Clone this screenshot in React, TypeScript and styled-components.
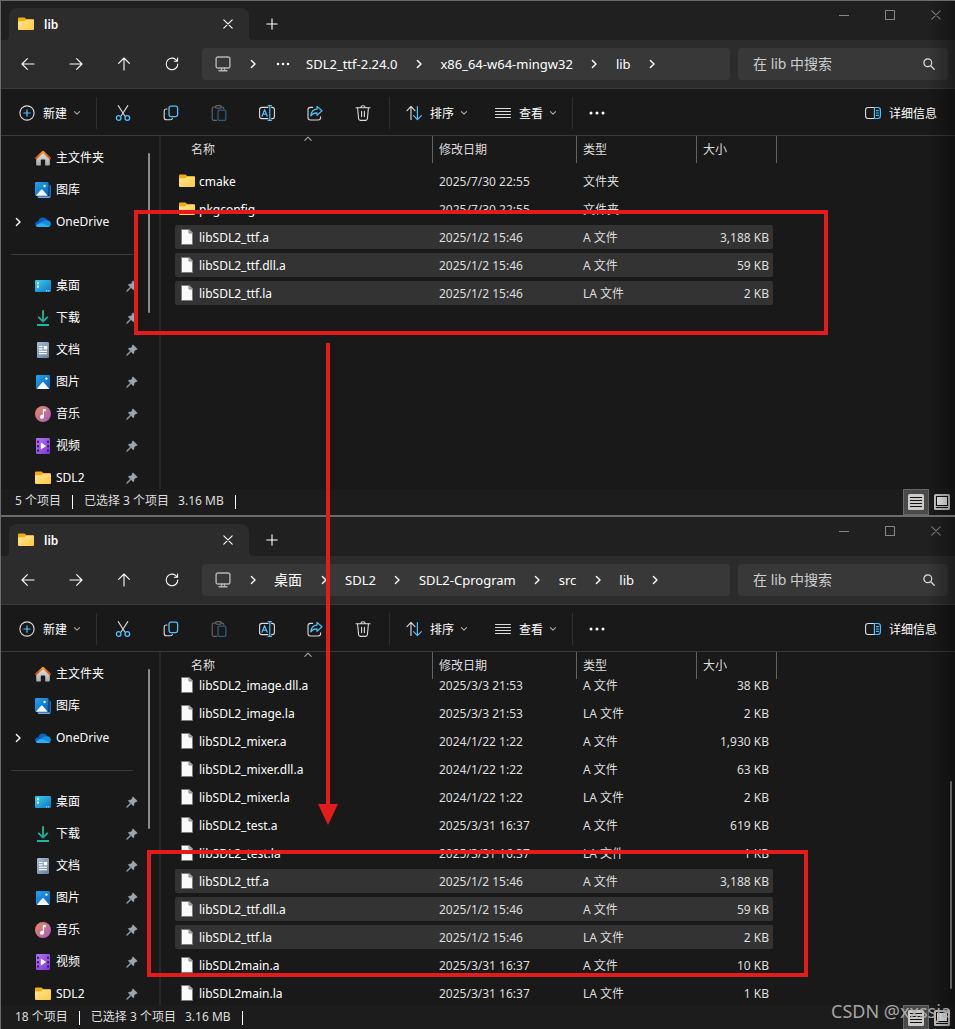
import React from "react";
import styled, { createGlobalStyle } from "styled-components";

const GlobalStyle = createGlobalStyle`
  *, *::before, *::after { box-sizing: border-box; }
  html, body { margin: 0; background: #191919; }
  body, button, input {
    font-family: "Noto Sans", "Noto Sans CJK SC", sans-serif;
    font-size: 12px;
    line-height: 16px;
    color: #ffffff;
  }
  button { margin: 0; padding: 0; border: 0; background: none; }
  svg { display: block; flex: none; }
`;

const Desktop = styled.main`
  position: relative;
  display: flex;
  flex-direction: column;
  height: 100vh;
  overflow: hidden;
`;

const ExplorerWindow = styled.section<{ $share: number; $cut?: boolean }>`
  position: relative;
  flex: ${(p) => p.$share} 1 0;
  min-height: 0;
  display: flex;
  flex-direction: column;
  overflow: hidden;
  background: #191919;
  border: 0 solid #6b6b6b;
  border-width: 1px 0 ${(p) => (p.$cut ? 0 : 1)}px 1px;
`;

const EdgeShade = styled.div`
  position: absolute;
  top: 0;
  right: 0;
  bottom: 0;
  width: 28px;
  pointer-events: none;
  background: linear-gradient(to right, rgba(0, 0, 0, 0), rgba(0, 0, 0, 0.35));
`;

const TitleBar = styled.header`
  flex: none;
  display: flex;
  align-items: flex-end;
  height: 39px;
  padding-left: 8px;
  background: #202020;
`;

const Tab = styled.div`
  position: relative;
  display: flex;
  align-items: center;
  width: 240px;
  height: 32px;
  padding: 0 16px 0 9px;
  gap: 10px;
  border-radius: 8px 8px 0 0;
  background: #2c2c2c;

  &::before,
  &::after {
    content: "";
    position: absolute;
    bottom: 0;
    width: 4px;
    height: 4px;
  }
  &::before {
    left: -4px;
    background: radial-gradient(circle at 0 0, #202020 4px, #2c2c2c 4px);
  }
  &::after {
    right: -4px;
    background: radial-gradient(circle at 100% 0, #202020 4px, #2c2c2c 4px);
  }
`;

const TabTitle = styled.span`
  flex: 1;
  padding-top: 2px;
  font-weight: 600;
`;

const NewTabButton = styled.button`
  display: grid;
  place-items: center;
  width: 32px;
  height: 32px;
  margin-left: 7px;
`;

const CaptionButtons = styled.div`
  align-self: flex-start;
  display: flex;
  margin-left: auto;
`;

const CaptionButton = styled.button`
  display: grid;
  place-items: center;
  width: 46px;
  height: 28px;
  color: #868686;

  &:last-child { width: 42px; padding-left: 4px; }
`;

const NavBar = styled.div`
  flex: none;
  display: flex;
  align-items: center;
  gap: 8px;
  height: 49px;
  padding: 0 7px 0 3px;
  background: #2c2c2c;
  border-bottom: 1px solid #3a3a3a;
`;

const NavButtons = styled.div`
  flex: none;
  display: flex;
  margin-right: -2px;
`;

const NavButton = styled.button`
  display: grid;
  place-items: center;
  width: 48px;
  height: 32px;
`;

const AddressBar = styled.nav`
  flex: 1;
  min-width: 0;
  display: flex;
  align-items: center;
  height: 32px;
  padding-left: 13px;
  border-radius: 4px;
  background: #383838;
  overflow: hidden;
`;

const Crumb = styled.a`
  flex: none;
  font-size: 13px;
  color: #ffffff;
  text-decoration: none;
  white-space: nowrap;

  &:lang(zh) { font-size: 14px; }
`;

const MoreCrumbs = styled.button`
  flex: none;
  margin-right: 14px;
`;

const CrumbArrow = styled.span`
  flex: none;
  display: grid;
  place-items: center;
  width: 43px;
`;

const SearchBox = styled.label`
  display: flex;
  align-items: center;
  width: 210px;
  height: 32px;
  padding: 0 13px 0 15px;
  border-radius: 4px;
  background: #383838;
`;

const SearchInput = styled.input`
  flex: 1;
  min-width: 0;
  padding: 0;
  border: 0;
  outline: 0;
  background: none;
  font-size: 14px;
  line-height: 20px;

  &::placeholder { color: #cecece; opacity: 1; }
`;

const CommandBar = styled.div`
  flex: none;
  display: flex;
  align-items: center;
  height: 47px;
  padding: 2px 18px 0 16px;
  border-bottom: 1px solid #3a3a3a;
`;

const CommandButton = styled.button<{ $flush?: boolean }>`
  display: flex;
  align-items: center;
  gap: 8px;
  height: 32px;
  padding: 0 ${(p) => (p.$flush ? 0 : 2)}px;
`;

const CommandLabel = styled.span`
  padding-top: 2px;
`;

const CommandGroup = styled.div<{ $gap?: number }>`
  display: flex;
  gap: ${(p) => p.$gap ?? 0}px;
`;

const CommandIconButton = styled.button<{ $dim?: boolean }>`
  display: grid;
  place-items: center;
  width: 48px;
  height: 32px;
  opacity: ${(p) => (p.$dim ? 0.4 : 1)};
`;

const Divider = styled.span<{ $before: number; $after: number }>`
  width: 1px;
  height: 32px;
  margin: 0 ${(p) => p.$after}px 0 ${(p) => p.$before}px;
  background: #2f2f2f;
`;

const PushRight = styled.div`
  margin-left: auto;
`;

const Caret = styled.span`
  margin-left: -2px;
`;

const Body = styled.div`
  flex: 1;
  min-height: 0;
  display: flex;
  overflow: hidden;
`;

const Sidebar = styled.nav`
  position: relative;
  flex: none;
  width: 160px;
  padding-top: 6px;
  border-right: 2px solid #282828;
  overflow: hidden;
`;

const SidebarList = styled.ul`
  margin: 0;
  padding: 0;
  list-style: none;

  & + & {
    margin: 16px 26px 0 10px;
    padding-top: 15px;
    border-top: 1px solid #3a3a3a;
  }
`;

const SidebarLink = styled.a<{ $pinned?: boolean }>`
  display: flex;
  align-items: center;
  gap: 5px;
  height: 32px;
  padding-left: ${(p) => (p.$pinned ? 24 : 34)}px;
  margin-right: ${(p) => (p.$pinned ? -5 : 0)}px;
  color: #ffffff;
  text-decoration: none;

  &[aria-expanded] { padding-left: 12px; }
`;

const ExpandMark = styled.span`
  display: grid;
  place-items: center;
  width: 9px;
  margin-right: 8px;
`;

const LinkLabel = styled.span`
  flex: 1;
`;

const ScrollThumb = styled.div<{ $top: number; $height: number; $right: number }>`
  position: absolute;
  top: ${(p) => p.$top}px;
  right: ${(p) => p.$right}px;
  width: 2px;
  height: ${(p) => p.$height}px;
  border-radius: 1px;
  background: #8c8c8c;
`;

const FilePane = styled.div`
  position: relative;
  flex: 1;
  min-width: 0;
  padding-left: 14px;
  overflow: hidden;
`;

const FileTable = styled.table`
  display: block;
`;

const HeadGroup = styled.thead`
  display: block;
`;

const HeadRow = styled.tr`
  position: relative;
  display: grid;
  grid-template-columns: 258px 144px 120px 80px;
  height: 28px;
`;

const HeadCell = styled.th<{ $first?: boolean }>`
  height: 27px;
  padding: 6px 0 0 ${(p) => (p.$first ? 16 : 6)}px;
  border-right: 1px solid #636363;
  font-weight: 400;
  text-align: left;
  color: #dedede;
`;

const SortMark = styled.span`
  position: absolute;
  top: 0;
  left: 129px;
`;

const FileRows = styled.tbody<{ $scrolled?: boolean }>`
  display: flex;
  flex-direction: column;
  gap: 4px;
  margin-top: ${(p) => (p.$scrolled ? -7 : 5)}px;
`;

const FileRow = styled.tr<{ $selected?: boolean }>`
  display: grid;
  grid-template-columns: 258px 144px 120px 76px;
  align-items: center;
  width: 598px;
  height: 24px;
  border-radius: 2px;
  background: ${(p) => (p.$selected ? "#333333" : "transparent")};
`;

const NameCell = styled.td`
  display: flex;
  align-items: center;
  gap: 4px;
  padding: 0 0 0 4px;
  white-space: nowrap;
`;

const FileName = styled.span`
  padding-top: 2px;
`;

const DataCell = styled.td<{ $numeric?: boolean }>`
  padding: 2px 4px 0 6px;
  color: #dedede;
  text-align: ${(p) => (p.$numeric ? "right" : "left")};
  white-space: nowrap;
`;

const StatusBar = styled.footer<{ $cut?: boolean }>`
  flex: none;
  display: flex;
  height: ${(p) => (p.$cut ? 24 : 26)}px;
  padding-left: 14px;
  overflow: hidden;
  line-height: 24px;
  color: #dedede;
  background: #1c1c1c;
`;

const StatusMark = styled.span`
  width: 1px;
  height: 14px;
  margin: 6px 11px 0;
  background: #ffffff;
`;

const StatusText = styled.span`
  & + & { margin-left: 9px; }
`;

const ViewButtons = styled.div`
  display: flex;
  margin-left: auto;
`;

const ViewButton = styled.button<{ $active?: boolean }>`
  display: grid;
  place-items: center;
  width: 26px;
  height: 26px;
  border: 1px solid ${(p) => (p.$active ? "#686868" : "transparent")};
  background: ${(p) => (p.$active ? "#4a4a4a" : "transparent")};
`;

const MarkBox = styled.div<{ $x: number; $y: number; $w: number; $h: number }>`
  position: absolute;
  left: ${(p) => p.$x}px;
  top: ${(p) => p.$y}px;
  width: ${(p) => p.$w}px;
  height: ${(p) => p.$h}px;
  border: 4px solid #e41b1b;
  pointer-events: none;
`;

const MarkArrow = styled.svg`
  position: absolute;
  left: 318px;
  top: 343px;
  pointer-events: none;
`;

const Watermark = styled.div`
  position: absolute;
  right: 4px;
  bottom: 6px;
  font-size: 18px;
  line-height: 24px;
  color: #b4b4b4;
  opacity: 0.9;
`;

const GradientDefs = styled.svg`
  position: absolute;
`;

type IconProps = { children: React.ReactNode; w?: number; h?: number; color?: string };

function Line({ children, w = 16, h = 16, color = "currentColor" }: IconProps) {
  return (
    <svg width={w} height={h} viewBox={`0 0 ${w} ${h}`} fill="none" stroke={color} strokeWidth="1.1" strokeLinecap="round" strokeLinejoin="round" aria-hidden="true">
      {children}
    </svg>
  );
}

const BLUE = "#4cc2ff";
const PALE = "#dcdcdc";

const Gradients = () => (
  <GradientDefs width="0" height="0" aria-hidden="true">
    <defs>
      <linearGradient id="gFolder" x1="0" y1="0" x2="1" y2="1"><stop offset="0" stopColor="#ffe79a" /><stop offset="1" stopColor="#ffc93c" /></linearGradient>
      <linearGradient id="gHouse" x1="0" y1="0" x2="0" y2="1"><stop offset="0" stopColor="#e8e8e8" /><stop offset="1" stopColor="#a9a9a9" /></linearGradient>
      <linearGradient id="gRoof" x1="0" y1="0" x2="0" y2="1"><stop offset="0" stopColor="#f59a23" /><stop offset="1" stopColor="#d1491a" /></linearGradient>
      <linearGradient id="gPhoto" x1="0" y1="0" x2="1" y2="1"><stop offset="0" stopColor="#23a4ee" /><stop offset="1" stopColor="#0a5fbd" /></linearGradient>
      <linearGradient id="gDesk" x1="0" y1="0" x2="1" y2="1"><stop offset="0" stopColor="#35d3ea" /><stop offset="1" stopColor="#1173c9" /></linearGradient>
      <linearGradient id="gDown" x1="0" y1="0" x2="0" y2="1"><stop offset="0" stopColor="#35c481" /><stop offset="1" stopColor="#12a99b" /></linearGradient>
      <linearGradient id="gDoc" x1="0" y1="0" x2="1" y2="1"><stop offset="0" stopColor="#a9bfd4" /><stop offset="1" stopColor="#63809f" /></linearGradient>
      <linearGradient id="gMusic" x1="0" y1="0" x2="1" y2="1"><stop offset="0" stopColor="#f08a5d" /><stop offset="1" stopColor="#a05ac0" /></linearGradient>
      <linearGradient id="gVideo" x1="0" y1="0" x2="1" y2="1"><stop offset="0" stopColor="#b677f2" /><stop offset="1" stopColor="#7a34d6" /></linearGradient>
    </defs>
  </GradientDefs>
);

const FolderIcon = () => (
  <svg width="16" height="16" viewBox="0 0 16 16" aria-hidden="true">
    <path d="M0 2.5Q0 1.5 1 1.5H6.2Q6.8 1.5 7.2 2L8.2 3.2H15Q16 3.2 16 4.2V6H0Z" fill="#f4ae0c" />
    <path d="M0 6Q0 5.2 1 5.2H6.4L8 3.6H15Q16 3.6 16 4.6V13Q16 14 15 14H1Q0 14 0 13Z" fill="url(#gFolder)" />
  </svg>
);

const FileIcon = () => (
  <svg width="16" height="16" viewBox="0 0 16 16" aria-hidden="true">
    <path d="M2.5 .5H10L13.5 4V15.5H2.5Z" fill="#fafafa" stroke="#7d7d7d" />
    <path d="M10 .5V4H13.5Z" fill="#d5d5d5" stroke="#7d7d7d" />
  </svg>
);

const HomeIcon = () => (
  <svg width="16" height="16" viewBox="0 0 16 16" aria-hidden="true">
    <path d="M1.2 7.5L8 1.5L14.8 7.5V14.5Q14.8 15.4 14 15.4H10.2V10.2Q10.2 9.4 9.4 9.4H6.6Q5.8 9.4 5.8 10.2V15.4H2Q1.2 15.4 1.2 14.5Z" fill="url(#gHouse)" />
    <path d="M1 8.2L8 1.8L15 8.2" fill="none" stroke="url(#gRoof)" strokeWidth="2" strokeLinecap="round" strokeLinejoin="round" />
  </svg>
);

const GalleryIcon = () => (
  <svg width="16" height="16" viewBox="0 0 16 16" aria-hidden="true">
    <path d="M14.4 2.5Q16 2.7 16 4V13.5Q16 16 13.5 16H4Q2.6 16 2.4 14.6H13Q14.4 14.6 14.4 13Z" fill="#1c6fc4" />
    <path d="M2.5 14.6H13.4L15.5 15Q14.8 16 13.5 16H4Q2.8 16 2.5 14.6Z" fill="#79aee6" />
    <rect width="13.6" height="13.8" rx="1.4" fill="url(#gPhoto)" />
    <path d="M1 13.4L6.3 7.6Q6.8 7.2 7.3 7.6L12.6 13.4Q12 13.8 11.5 13.8H2Q1.4 13.8 1 13.4Z" fill="#f4faff" />
    <circle cx="9.6" cy="4" r="1.2" fill="#f4faff" />
  </svg>
);

const CloudIcon = () => (
  <svg width="16" height="16" viewBox="0 0 16 16" aria-hidden="true">
    <path d="M3.3 7.2A5 5 0 0 1 12.6 6.3L8.5 10L2 12.5Q0 11.5 0 9.7Q.3 7.5 3.3 7.2Z" fill="#0a63c0" />
    <path d="M12.4 6.3Q15.7 6.8 16 9.8Q15.8 12.9 13 13H3.6Q1.7 13 .7 11.6L6.6 8Q9.3 5.8 12.4 6.3Z" fill="#168de0" />
    <path d="M.7 11.7Q4 8.4 8 9.4L14.9 12.3Q14 13 13 13H3.6Q1.6 13 .7 11.7Z" fill="#2bb0f4" />
  </svg>
);

const DesktopIcon = () => (
  <svg width="16" height="16" viewBox="0 0 16 16" aria-hidden="true">
    <rect y="2" width="16" height="12" rx="1.2" fill="url(#gDesk)" />
    <rect x="2" y="4.2" width="2" height="2" fill="#fff" />
    <rect x="2" y="7.6" width="2" height="2" fill="#fff" />
    <path d="M11 12.8H12.2M13.2 12.8H14.4" stroke="#d9f2ff" />
  </svg>
);

const DownloadIcon = () => (
  <svg width="16" height="16" viewBox="0 0 16 16" fill="none" stroke="url(#gDown)" strokeWidth="1.8" aria-hidden="true">
    <path d="M8.1 0.2L8 11.4M3.2 6.8L8 11.4L12.8 6.8" />
    <path d="M2 15L14 15.01" stroke="#1bb89b" />
  </svg>
);

const DocumentIcon = () => (
  <svg width="16" height="16" viewBox="0 0 16 16" aria-hidden="true">
    <rect x="2" width="12" height="16" rx="1.2" fill="url(#gDoc)" />
    <path d="M4 4.5H7.6M4 6.9H7.6M4 9.3H12M4 11.7H12" stroke="#fff" strokeWidth="1.2" />
    <rect x="8.8" y="4" width="3.4" height="3.4" fill="#fff" />
  </svg>
);

const PictureIcon = () => (
  <svg width="16" height="16" viewBox="0 0 16 16" aria-hidden="true">
    <rect x="1" y="1" width="14" height="14" rx="1.2" fill="url(#gPhoto)" />
    <path d="M2 14.4L7.4 8.2Q8 7.7 8.6 8.2L14 14.4Q13.6 15 13 15H3Q2.4 15 2 14.4Z" fill="#f4faff" />
    <circle cx="11.4" cy="4.6" r="1.2" fill="#f4faff" />
  </svg>
);

const MusicIcon = () => (
  <svg width="16" height="16" viewBox="0 0 16 16" aria-hidden="true">
    <circle cx="8" cy="8" r="8" fill="url(#gMusic)" />
    <path d="M7.8 3H10.8V5.2H9V10.7A2 2 0 1 1 7.8 8.9Z" fill="#fff" />
  </svg>
);

const VideoIcon = () => (
  <svg width="16" height="16" viewBox="0 0 16 16" aria-hidden="true">
    <rect x="1" width="14" height="16" rx="1.2" fill="url(#gVideo)" />
    <path d="M3 2.8V14M13 2.8V14" stroke="#3c1470" strokeWidth="2" strokeDasharray="2 2.4" />
    <path d="M5.8 4.6V11.6L11.2 8.1Z" fill="#fff" />
  </svg>
);

const PinIcon = () => (
  <svg width="12" height="12" viewBox="0 0 12 12" aria-hidden="true">
    <path d="M7 .8L11.3 5L10.6 5.8Q9.6 5.6 9 6.2L8 7.4Q8.2 9 7.4 9.9L5 7.6L1.6 11.2L.6 11.4L.9 10.4L4.4 7L2.2 4.7Q3.1 3.9 4.7 4.1L6 3Q6.5 2.4 6.2 1.5Z" fill="#9aa5ad" stroke="#9aa5ad" strokeWidth=".5" />
  </svg>
);

const ChevronRight = () => (
  <Line w={8} h={10}><path d="M2.4 1.4L6 5L2.4 8.6" strokeWidth="1.4" /></Line>
);
const ChevronDown = () => (
  <Line w={8} h={8} color="#a8a8a8"><path d="M1.4 2.6L4 5.2L6.6 2.6" /></Line>
);
const ChevronUp = () => (
  <Line w={8} h={6} color="#a8a8a8"><path d="M.8 4.4L4 1.2L7.2 4.4" /></Line>
);
const CloseIcon = () => (
  <Line w={10} h={10}><path d="M.8 .8L9.2 9.2M9.2 .8L.8 9.2" /></Line>
);
const MonitorIcon = () => (
  <Line color="#b4b4b4"><rect x="1.1" y="1" width="13.8" height="11" rx="1.8" strokeWidth="1.4" /><path d="M6.5 12V14.6M9.5 12V14.6M4 14.7H12" strokeWidth="1.4" /></Line>
);
const DotsIcon = ({ size }: { size: number }) => (
  <svg width="18" height="4" viewBox="0 0 18 4" fill="#fff" aria-hidden="true">
    <circle cx={9 - size} cy="2" r={size / 4} /><circle cx="9" cy="2" r={size / 4} /><circle cx={9 + size} cy="2" r={size / 4} />
  </svg>
);
const SearchIcon = () => (
  <Line w={12} h={12} color="#e2e2e2"><circle cx="4.8" cy="4.8" r="3.9" strokeWidth="1.2" /><path d="M7.8 7.8L11.2 11.2" strokeWidth="1.4" /></Line>
);

function Caption() {
  return (
    <CaptionButtons>
      <CaptionButton aria-label="最小化"><Line w={10} h={10}><path d="M0 5.5H10" /></Line></CaptionButton>
      <CaptionButton aria-label="最大化"><Line w={10} h={10}><rect x=".5" y=".5" width="9" height="9" rx=".5" /></Line></CaptionButton>
      <CaptionButton aria-label="关闭"><CloseIcon /></CaptionButton>
    </CaptionButtons>
  );
}

function Commands() {
  return (
    <CommandBar>
      <CommandButton>
        <Line color={PALE}><circle cx="8" cy="8" r="7.1" /><path d="M8 4.8V11.2M4.8 8H11.2" stroke={BLUE} strokeWidth="1.2" /></Line>
        <CommandLabel>新建</CommandLabel>
        <Caret><ChevronDown /></Caret>
      </CommandButton>
      <Divider $before={13} $after={2} />
      <CommandGroup>
        <CommandIconButton aria-label="剪切">
          <Line color={PALE}><path d="M3.2 .6L9.9 11M12.8 .6L6.1 11" /><g stroke={BLUE} strokeWidth="1.3"><circle cx="3.7" cy="13" r="2.3" /><circle cx="12.3" cy="13" r="2.3" /></g></Line>
        </CommandIconButton>
        <CommandIconButton aria-label="复制">
          <Line color={PALE}><path d="M4 4H3Q1.2 4 1.2 6V12.5Q1.2 14.8 3.5 14.8H7.4Q9.2 14.8 9.4 13.2" /><rect x="6" y="1.2" width="8.6" height="10.4" rx="1.8" stroke={BLUE} strokeWidth="1.3" /></Line>
        </CommandIconButton>
        <CommandIconButton aria-label="粘贴" $dim>
          <Line color={PALE}><path d="M4.6 2H2.8Q1.2 2 1.2 3.6V13.8Q1.2 15.4 2.8 15.4H5.6M10 2H11.4Q12.8 2 12.8 3.6V4" /><rect x="4.6" y=".6" width="5.6" height="2.6" rx="1.2" /><rect x="7" y="5.2" width="7.8" height="10.2" rx="1.4" stroke={BLUE} strokeWidth="1.3" /></Line>
        </CommandIconButton>
        <CommandIconButton aria-label="重命名">
          <Line color={PALE}><path d="M9 2.4H3Q.6 2.4 .6 4.6V11.4Q.6 13.6 3 13.6H9M12.6 2.4H13.2Q15.4 2.4 15.4 4.6V11.4Q15.4 13.6 13.2 13.6H12.6" /><path d="M3 11.2L5.6 4.6L8.2 11.2M4 9.2H7.2M9.2 .6H12.4M9.2 15.4H12.4M10.8 .6V15.4" stroke={BLUE} strokeWidth="1.2" /></Line>
        </CommandIconButton>
        <CommandIconButton aria-label="共享">
          <Line color={PALE}><path d="M5.6 2.4H3.4Q1 2.4 1 4.8V12.6Q1 15 3.4 15H11.2Q13.6 15 13.6 12.6V11.8" /><path d="M10 1.4L15 5.8L10 10.4V7.8Q6 7.6 3.8 10.8Q4.4 4.6 10 4.2Z" stroke={BLUE} strokeWidth="1.2" /></Line>
        </CommandIconButton>
        <CommandIconButton aria-label="删除">
          <Line color={PALE}><path d="M1 2.8H15M5.8 2.6Q6 .7 8 .7Q10 .7 10.2 2.6M2.6 3L3.6 13.8Q3.8 15.4 5.4 15.4H10.6Q12.2 15.4 12.4 13.8L13.4 3M6.6 6.4V11.6M9.4 6.4V11.6" /></Line>
        </CommandIconButton>
      </CommandGroup>
      <Divider $before={2} $after={16} />
      <CommandGroup $gap={25}>
        <CommandButton $flush>
          <Line color={PALE}><path d="M5 14.4V1.6M1 5.6L5 1.4L9 5.6" /><path d="M11.4 1.6V14.4M7.6 10.6L11.4 14.6L15.4 10.6" stroke={BLUE} strokeWidth="1.2" /></Line>
          <CommandLabel>排序</CommandLabel>
          <Caret><ChevronDown /></Caret>
        </CommandButton>
        <CommandButton>
          <Line color={PALE}><path d="M.5 3.5H15.5M.5 6.5H15.5M.5 9.5H15.5M.5 12.5H15.5" /></Line>
          <CommandLabel>查看</CommandLabel>
          <Caret><ChevronDown /></Caret>
        </CommandButton>
      </CommandGroup>
      <Divider $before={13} $after={0} />
      <CommandIconButton aria-label="更多"><DotsIcon size={6} /></CommandIconButton>
      <PushRight>
        <CommandButton $flush>
          <Line color={PALE}><path d="M9.4 2.5H3Q.6 2.5 .6 4.9V11.1Q.6 13.5 3 13.5H9.4" /><path d="M9.4 2.5H13Q15.4 2.5 15.4 4.9V11.1Q15.4 13.5 13 13.5H9.4ZM11.4 5.6H13.4M11.4 8H13.4M11.4 10.4H13.4" stroke={BLUE} strokeWidth="1.2" /></Line>
          <CommandLabel>详细信息</CommandLabel>
        </CommandButton>
      </PushRight>
    </CommandBar>
  );
}

const pinned: [string, () => React.JSX.Element][] = [
  ["桌面", DesktopIcon],
  ["下载", DownloadIcon],
  ["文档", DocumentIcon],
  ["图片", PictureIcon],
  ["音乐", MusicIcon],
  ["视频", VideoIcon],
  ["SDL2", FolderIcon],
];

function Places() {
  return (
    <Sidebar aria-label="导航窗格">
      <SidebarList>
        <li><SidebarLink href="#"><HomeIcon />主文件夹</SidebarLink></li>
        <li><SidebarLink href="#"><GalleryIcon />图库</SidebarLink></li>
        <li><SidebarLink href="#" aria-expanded={false}><ExpandMark><ChevronRight /></ExpandMark><CloudIcon />OneDrive</SidebarLink></li>
      </SidebarList>
      <SidebarList>
        {pinned.map(([label, Icon]) => (
          <li key={label}><SidebarLink href="#" $pinned><Icon /><LinkLabel>{label}</LinkLabel><PinIcon /></SidebarLink></li>
        ))}
      </SidebarList>
      <ScrollThumb $top={17} $height={160} $right={9} />
    </Sidebar>
  );
}

type Entry = { name: string; date: string; type: string; size?: string; selected?: boolean; folder?: boolean };
type ExplorerProps = {
  share: number;
  crumbs: string[];
  collapsed?: boolean;
  entries: Entry[];
  scrolled?: boolean;
  count: string;
};

function Explorer({ share, crumbs, collapsed, entries, scrolled, count }: ExplorerProps) {
  return (
    <ExplorerWindow $share={share} $cut={scrolled}>
      <TitleBar>
        <Tab>
          <FolderIcon />
          <TabTitle>lib</TabTitle>
          <button aria-label="关闭选项卡"><CloseIcon /></button>
        </Tab>
        <NewTabButton aria-label="添加新选项卡"><Line w={12} h={12}><path d="M6 .8V11.2M.8 6H11.2" /></Line></NewTabButton>
        <Caption />
      </TitleBar>
      <NavBar>
        <NavButtons>
          <NavButton aria-label="后退"><Line><path d="M2 8H14M7.4 2.6L2 8L7.4 13.4" /></Line></NavButton>
          <NavButton aria-label="前进"><Line><path d="M14 8H2M8.6 2.6L14 8L8.6 13.4" /></Line></NavButton>
          <NavButton aria-label="向上"><Line><path d="M8 14V2M2.6 7.4L8 2L13.4 7.4" /></Line></NavButton>
          <NavButton aria-label="刷新"><Line><path d="M13.8 8A5.8 5.8 0 1 1 11.6 3.4L13.4 5M13.6 2V5.2H10.4" /></Line></NavButton>
        </NavButtons>
        <AddressBar aria-label="地址栏">
          <MonitorIcon />
          <CrumbArrow><ChevronRight /></CrumbArrow>
          {collapsed && <MoreCrumbs aria-label="更多位置"><DotsIcon size={5} /></MoreCrumbs>}
          {crumbs.map((c) => (
            <React.Fragment key={c}>
              <Crumb href="#" lang={c === "桌面" ? "zh" : "en"}>{c}</Crumb>
              <CrumbArrow><ChevronRight /></CrumbArrow>
            </React.Fragment>
          ))}
        </AddressBar>
        <SearchBox>
          <SearchInput type="text" placeholder="在 lib 中搜索" aria-label="在 lib 中搜索" />
          <SearchIcon />
        </SearchBox>
      </NavBar>
      <Commands />
      <Body>
        <Places />
        <FilePane>
          <FileTable cellSpacing={0}>
            <HeadGroup>
              <HeadRow>
                <HeadCell $first>名称<SortMark><ChevronUp /></SortMark></HeadCell>
                <HeadCell>修改日期</HeadCell>
                <HeadCell>类型</HeadCell>
                <HeadCell>大小</HeadCell>
              </HeadRow>
            </HeadGroup>
            <FileRows $scrolled={scrolled}>
              {entries.map((e) => (
                <FileRow key={e.name} $selected={e.selected}>
                  <NameCell>{e.folder ? <FolderIcon /> : <FileIcon />}<FileName>{e.name}</FileName></NameCell>
                  <DataCell>{e.date}</DataCell>
                  <DataCell>{e.type}</DataCell>
                  <DataCell $numeric>{e.size}</DataCell>
                </FileRow>
              ))}
            </FileRows>
          </FileTable>
          {scrolled && <ScrollThumb $top={129} $height={208} $right={3} />}
        </FilePane>
      </Body>
      <StatusBar $cut={scrolled}>
        <StatusText>{count} 个项目</StatusText>
        <StatusMark />
        <StatusText>已选择 3 个项目</StatusText>
        <StatusText>3.16 MB</StatusText>
        <StatusMark />
        <ViewButtons>
          <ViewButton $active aria-label="详细信息视图">
            <svg width="16" height="16" viewBox="0 0 16 16" aria-hidden="true"><rect width="16" height="16" rx="1.5" fill="#cfcaca" /><path d="M2 3.5H14M2 6.5H14M2 9.5H14M2 12.5H14" stroke="#111" /></svg>
          </ViewButton>
          <ViewButton aria-label="大图标视图">
            <svg width="16" height="16" viewBox="0 0 16 16" aria-hidden="true"><rect width="16" height="16" rx="1.5" fill="#cfcaca" /><rect x="2.5" y="2.5" width="11" height="9" fill="#f2f2f2" stroke="#111" /><path d="M2 13.5H14" stroke="#111" /></svg>
          </ViewButton>
        </ViewButtons>
      </StatusBar>
      <EdgeShade />
    </ExplorerWindow>
  );
}

const A = "A 文件";
const LA = "LA 文件";

const ttfFiles: Entry[] = [
  { name: "libSDL2_ttf.a", date: "2025/1/2 15:46", type: A, size: "3,188 KB", selected: true },
  { name: "libSDL2_ttf.dll.a", date: "2025/1/2 15:46", type: A, size: "59 KB", selected: true },
  { name: "libSDL2_ttf.la", date: "2025/1/2 15:46", type: LA, size: "2 KB", selected: true },
];

const sourceEntries: Entry[] = [
  { name: "cmake", date: "2025/7/30 22:55", type: "文件夹", folder: true },
  { name: "pkgconfig", date: "2025/7/30 22:55", type: "文件夹", folder: true },
  ...ttfFiles,
];

const targetEntries: Entry[] = [
  { name: "libSDL2_image.dll.a", date: "2025/3/3 21:53", type: A, size: "38 KB" },
  { name: "libSDL2_image.la", date: "2025/3/3 21:53", type: LA, size: "2 KB" },
  { name: "libSDL2_mixer.a", date: "2024/1/22 1:22", type: A, size: "1,930 KB" },
  { name: "libSDL2_mixer.dll.a", date: "2024/1/22 1:22", type: A, size: "63 KB" },
  { name: "libSDL2_mixer.la", date: "2024/1/22 1:22", type: LA, size: "2 KB" },
  { name: "libSDL2_test.a", date: "2025/3/31 16:37", type: A, size: "619 KB" },
  { name: "libSDL2_test.la", date: "2025/3/31 16:37", type: LA, size: "1 KB" },
  ...ttfFiles,
  { name: "libSDL2main.a", date: "2025/3/31 16:37", type: A, size: "10 KB" },
  { name: "libSDL2main.la", date: "2025/3/31 16:37", type: LA, size: "1 KB" },
];

export default function App() {
  return (
    <Desktop>
      <GlobalStyle />
      <Gradients />
      <Explorer share={514} collapsed crumbs={["SDL2_ttf-2.24.0", "x86_64-w64-mingw32", "lib"]} entries={sourceEntries} count="5" />
      <Explorer share={512} scrolled crumbs={["桌面", "SDL2", "SDL2-Cprogram", "src", "lib"]} entries={targetEntries} count="18" />
      <MarkBox $x={134} $y={210} $w={694} $h={125} />
      <MarkBox $x={147} $y={850} $w={661} $h={127} />
      <MarkArrow width="20" height="482" viewBox="0 0 20 482" fill="#e41b1b" aria-hidden="true">
        <path d="M8 0H12V461H20L10 482L0 461H8Z" />
      </MarkArrow>
      <Watermark>CSDN @xxssja</Watermark>
    </Desktop>
  );
}
